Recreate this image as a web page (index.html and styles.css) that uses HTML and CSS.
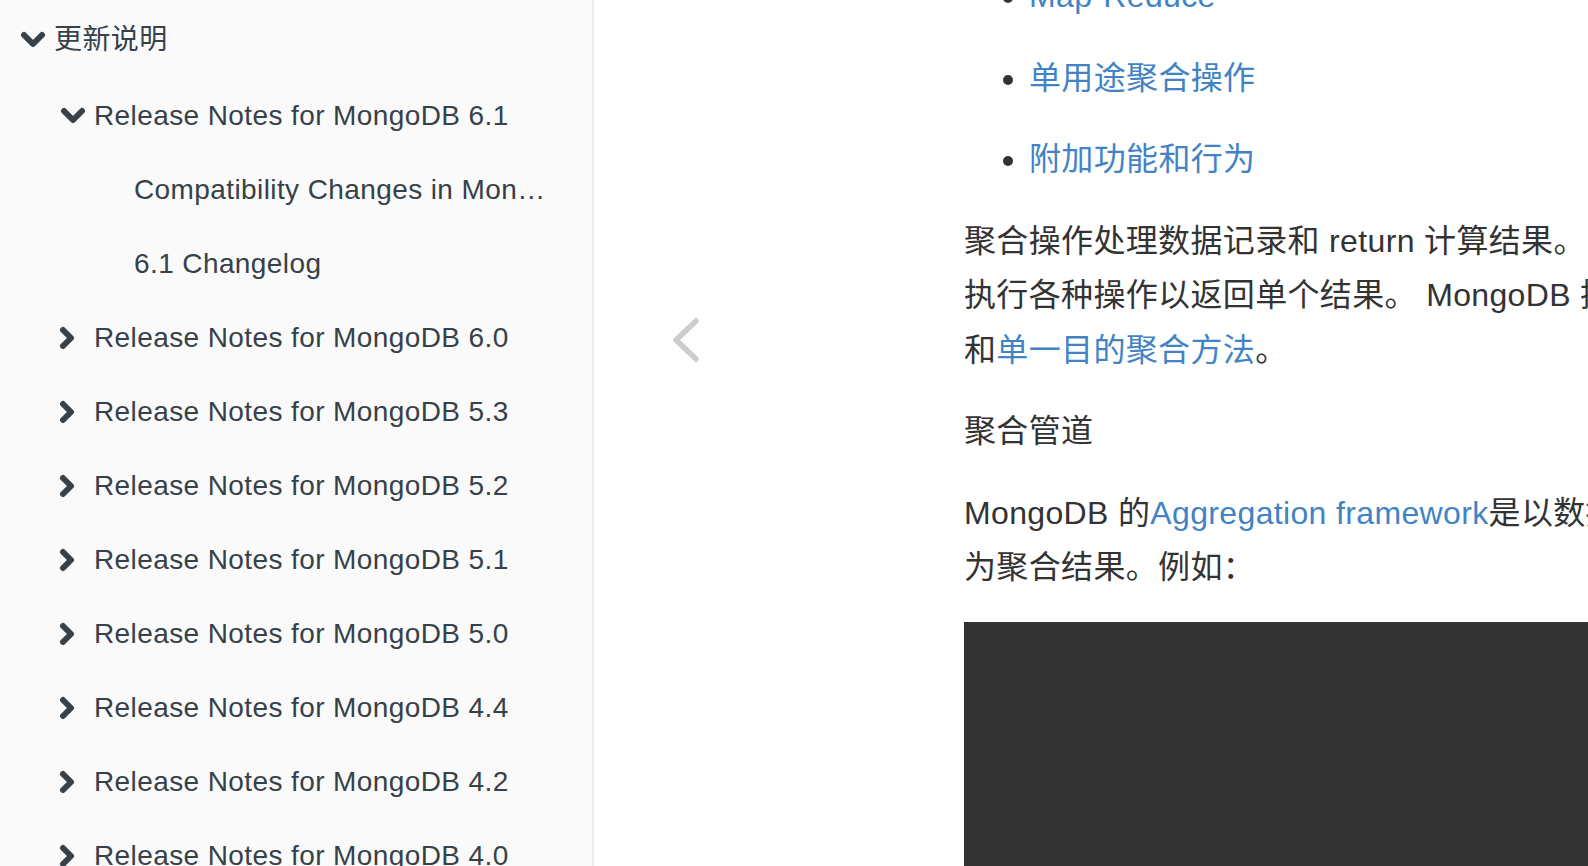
FILE: index.html
```html
<!DOCTYPE html>
<html lang="zh-CN">
<head>
<meta charset="utf-8">
<title>聚合操作</title>
<link rel="stylesheet" href="styles.css">
</head>
<body>
<div class="book">
  <nav class="summary">
    <ul class="toc">
      <li class="first">
        <a class="row"><span class="chev"><svg class="down" viewBox="0 0 26 18" width="26" height="18"><polyline points="4,4 13,13 22,4"/></svg></span><span class="label">更新说明</span></a>
        <ul class="sub">
          <li>
            <a class="row"><span class="chev"><svg class="down" viewBox="0 0 26 18" width="26" height="18"><polyline points="4,4 13,13 22,4"/></svg></span><span class="label">Release Notes for MongoDB 6.1</span></a>
            <ul class="sub">
              <li><a class="row"><span class="chev"></span><span class="label">Compatibility Changes in MongoDB 6.1</span></a></li>
              <li><a class="row"><span class="chev"></span><span class="label">6.1 Changelog</span></a></li>
            </ul>
          </li>
          <li><a class="row"><span class="chev"><svg class="right" viewBox="0 0 18 24" width="18" height="24"><polyline points="4,4 12,12 4,20"/></svg></span><span class="label">Release Notes for MongoDB 6.0</span></a></li>
          <li><a class="row"><span class="chev"><svg class="right" viewBox="0 0 18 24" width="18" height="24"><polyline points="4,4 12,12 4,20"/></svg></span><span class="label">Release Notes for MongoDB 5.3</span></a></li>
          <li><a class="row"><span class="chev"><svg class="right" viewBox="0 0 18 24" width="18" height="24"><polyline points="4,4 12,12 4,20"/></svg></span><span class="label">Release Notes for MongoDB 5.2</span></a></li>
          <li><a class="row"><span class="chev"><svg class="right" viewBox="0 0 18 24" width="18" height="24"><polyline points="4,4 12,12 4,20"/></svg></span><span class="label">Release Notes for MongoDB 5.1</span></a></li>
          <li><a class="row"><span class="chev"><svg class="right" viewBox="0 0 18 24" width="18" height="24"><polyline points="4,4 12,12 4,20"/></svg></span><span class="label">Release Notes for MongoDB 5.0</span></a></li>
          <li><a class="row"><span class="chev"><svg class="right" viewBox="0 0 18 24" width="18" height="24"><polyline points="4,4 12,12 4,20"/></svg></span><span class="label">Release Notes for MongoDB 4.4</span></a></li>
          <li><a class="row"><span class="chev"><svg class="right" viewBox="0 0 18 24" width="18" height="24"><polyline points="4,4 12,12 4,20"/></svg></span><span class="label">Release Notes for MongoDB 4.2</span></a></li>
          <li><a class="row"><span class="chev"><svg class="right" viewBox="0 0 18 24" width="18" height="24"><polyline points="4,4 12,12 4,20"/></svg></span><span class="label">Release Notes for MongoDB 4.0</span></a></li>
        </ul>
      </li>
    </ul>
  </nav>

  <main class="body">
    <a class="nav-prev" aria-label="上一页"><svg viewBox="0 0 30 46" width="30" height="46"><polyline points="25,4 5,23 25,42"/></svg></a>
    <div class="page">
      <ul class="list">
        <li><p><a class="link">Map-Reduce</a></p></li>
        <li><p><a class="link">单用途聚合操作</a></p></li>
        <li><p><a class="link">附加功能和行为</a></p></li>
      </ul>
      <p>聚合操作处理数据记录和 return 计算结果。 聚合操作将来自多个文档的值组合在一起，并且可以对分组数据<br>执行各种操作以返回单个结果。 MongoDB 提供了三种执行聚合的方式：聚合管道、map-reduce 函数<br>和<a class="link">单一目的聚合方法</a>。</p>
      <p>聚合管道</p>
      <p>MongoDB 的<a class="link">Aggregation framework</a>是以数据处理管道的概念为模型的。文档进入一个多阶段的管道，该管道将文档转换<br>为聚合结果。例如：</p>
      <pre class="code"></pre>
    </div>
  </main>
</div>
</body>
</html>
```

FILE: styles.css
```css
html, body {
  margin: 0;
  padding: 0;
  height: 100%;
  overflow: hidden;
  background: #ffffff;
}

.book {
  display: flex;
  height: 866px;
  overflow: hidden;
}

/* ---------- sidebar ---------- */
.summary {
  flex: 0 0 592px;
  width: 592px;
  background: #fafafa;
  border-right: 2px solid #ebebeb;
  overflow: hidden;
  font-family: "Liberation Sans", Arial, "Noto Sans CJK SC", sans-serif;
  font-size: 28px;
  letter-spacing: 0.4px;
  color: #364149;
  padding-top: 3px;
}

.toc, .sub {
  list-style: none;
  margin: 0;
  padding: 0;
}

.sub {
  padding-left: 40px;
}

.first > .row {
  margin-bottom: 2px;
}

.row {
  display: flex;
  align-items: center;
  height: 74px;
  padding: 0 40px 0 20px;
  box-sizing: border-box;
  line-height: 34px;
  color: #364149;
  text-decoration: none;
  white-space: nowrap;
}

.chev {
  flex: 0 0 34px;
  width: 34px;
  display: flex;
  align-items: center;
}

.chev svg polyline {
  fill: none;
  stroke: #364149;
  stroke-width: 6;
  stroke-linecap: round;
  stroke-linejoin: round;
}

.chev svg.right {
  margin-left: -1px;
}

.label {
  flex: 1 1 auto;
  min-width: 0;
  overflow: hidden;
  text-overflow: ellipsis;
}

/* ---------- body ---------- */
.body {
  position: relative;
  flex: 1 1 auto;
  min-width: 0;
  padding-left: 370px;
  overflow: hidden;
}

.nav-prev {
  position: absolute;
  left: 77px;
  top: 317px;
  display: block;
  width: 30px;
  height: 46px;
}

.nav-prev polyline {
  fill: none;
  stroke: #cccccc;
  stroke-width: 5.5;
  stroke-linecap: round;
  stroke-linejoin: round;
}

.page {
  width: 1540px;
  margin-top: -31px;
  font-family: "Liberation Sans", Arial, "Noto Sans CJK SC", sans-serif;
  font-size: 32px;
  letter-spacing: 0.35px;
  line-height: 1.7;
  color: #333333;
}

.page p {
  margin: 0 0 0.85em 0;
  white-space: nowrap;
}

.list {
  margin: 0 0 0.85em 0;
  padding-left: 65px;
}

.list li::marker {
  color: #333333;
}

.link {
  color: #4183c4;
  text-decoration: none;
}

.code {
  margin: 0;
  height: 600px;
  background: #333333;
}
```
